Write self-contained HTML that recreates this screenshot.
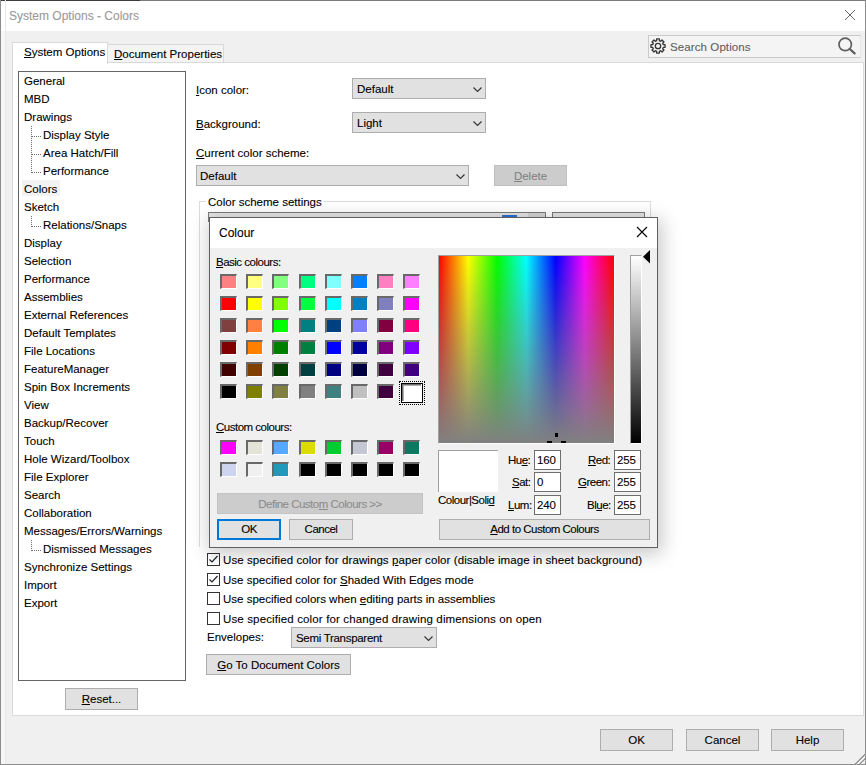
<!DOCTYPE html>
<html><head><meta charset="utf-8">
<style>
*{box-sizing:border-box;margin:0;padding:0}
html,body{width:866px;height:765px;overflow:hidden;background:#f0f0f0}
body{position:relative;font-family:"Liberation Sans",sans-serif;font-size:11.5px;color:#000;-webkit-text-stroke:0.1px currentColor}
.a{position:absolute}
.t{position:absolute;white-space:nowrap;line-height:18px;height:18px}
.u{text-decoration:underline;text-underline-offset:1px}
.btn{position:absolute;background:#e1e1e1;border:1px solid #adadad;text-align:center;white-space:nowrap}
.combo{position:absolute;background:#e1e1e1;border:1px solid #adadad;white-space:nowrap}
.combo svg{position:absolute;right:3px;top:8px}
.tree .t{left:24px}
.tree .s{left:43px}
.sw{position:absolute;width:17px;height:15px;border-top:2px solid #696969;border-left:2px solid #696969;border-right:1px solid #fff;border-bottom:1px solid #fff}
.cb{position:absolute;width:13px;height:13px;border:1px solid #333;background:#fff}
.dl{font-size:11.5px;letter-spacing:-0.5px}
.ed{position:absolute;background:#fff;border:1px solid #6f6f6f;height:20px;width:27px;padding-left:2px;line-height:19px;font-size:11.5px;letter-spacing:-0.2px}
</style></head><body>
<!-- window frame -->
<div class="a" style="left:0;top:0;width:866px;height:31px;background:#fff"></div>
<div class="a" style="left:0;top:0;width:866px;height:1px;background:#7a7a7a"></div><div class="a" style="left:0;top:0;width:140px;height:1px;background:#3c3c3c"></div>
<div class="a" style="left:1px;top:31px;width:4px;height:733px;background:#f6f6f6"></div><div class="a" style="left:5px;top:0;width:1px;height:764px;background:#e9e9e9"></div>
<div class="a" style="left:0;top:0;width:1px;height:765px;background:#8c8c8c"></div>
<div class="a" style="left:865px;top:0;width:1px;height:765px;background:#8c8c8c"></div>
<div class="a" style="left:0;top:764px;width:866px;height:1px;background:#8c8c8c"></div>
<div class="t" style="left:9px;top:7px;color:#9a9a9a;font-size:12px">System Options - Colors</div>
<svg class="a" style="left:844px;top:9px" width="12" height="12"><path d="M1 1L11 11M11 1L1 11" stroke="#6a6a6a" stroke-width="1"/></svg>

<!-- search -->
<div class="a" style="left:648px;top:35px;width:213px;height:23px;background:#f4f4f4;border:1px solid #c9c9c9;border-right-color:#e6e6e6"></div>
<svg class="a" style="left:648px;top:36px" width="20" height="20" viewBox="0 0 20 20"><path d="M7.93 5.01 L8.60 4.78 L8.63 2.93 L11.37 2.93 L11.40 4.78 L12.07 5.01 L12.70 5.32 L14.03 4.03 L15.97 5.97 L14.68 7.30 L14.99 7.93 L15.22 8.60 L17.07 8.63 L17.07 11.37 L15.22 11.40 L14.99 12.07 L14.68 12.70 L15.97 14.03 L14.03 15.97 L12.70 14.68 L12.07 14.99 L11.40 15.22 L11.37 17.07 L8.63 17.07 L8.60 15.22 L7.93 14.99 L7.30 14.68 L5.97 15.97 L4.03 14.03 L5.32 12.70 L5.01 12.07 L4.78 11.40 L2.93 11.37 L2.93 8.63 L4.78 8.60 L5.01 7.93 L5.32 7.30 L4.03 5.97 L5.97 4.03 L7.30 5.32Z" fill="none" stroke="#333" stroke-width="1.3" stroke-linejoin="round"/><circle cx="10" cy="10" r="2.7" fill="none" stroke="#333" stroke-width="1.3"/></svg>
<div class="t" style="left:670px;top:38px;color:#606060;font-size:11.5px;letter-spacing:0.1px">Search Options</div>
<svg class="a" style="left:835px;top:35px" width="24" height="22"><circle cx="10.2" cy="9.4" r="6.2" fill="none" stroke="#5e5e5e" stroke-width="1.7"/><path d="M14.8 14L19.6 18.4" stroke="#5e5e5e" stroke-width="2.3" stroke-linecap="round"/></svg>

<!-- tabs & panel -->
<div class="a" style="left:12px;top:62px;width:852px;height:654px;background:#fff;border:1px solid #d9d9d9"></div>
<div class="a" style="left:107px;top:44px;width:117px;height:18px;background:#f4f4f4;border:1px solid #d9d9d9;border-bottom:none"></div>
<div class="a" style="left:12px;top:42px;width:96px;height:22px;background:#fff;border:1px solid #d9d9d9;border-bottom:none"></div>
<div class="t" style="left:24px;top:43px"><span class="u">S</span>ystem Options</div>
<div class="t" style="left:114px;top:45px"><span class="u">D</span>ocument Properties</div>

<!-- tree -->
<div class="a tree" style="left:18px;top:71px;width:168px;height:610px;background:#fff;border:1px solid #646464">
</div>
<div class="tree">
<div class="a" style="left:22px;top:180px;width:38px;height:16px;background:#f2f2f2"></div>
<div class="t" style="top:72px">General</div>
<div class="t" style="top:90px">MBD</div>
<div class="t" style="top:108px">Drawings</div>
<div class="t s" style="top:126px">Display Style</div>
<div class="t s" style="top:144px">Area Hatch/Fill</div>
<div class="t s" style="top:162px">Performance</div>
<div class="t" style="top:180px">Colors</div>
<div class="t" style="top:198px">Sketch</div>
<div class="t s" style="top:216px">Relations/Snaps</div>
<div class="t" style="top:234px">Display</div>
<div class="t" style="top:252px">Selection</div>
<div class="t" style="top:270px">Performance</div>
<div class="t" style="top:288px">Assemblies</div>
<div class="t" style="top:306px">External References</div>
<div class="t" style="top:324px">Default Templates</div>
<div class="t" style="top:342px">File Locations</div>
<div class="t" style="top:360px">FeatureManager</div>
<div class="t" style="top:378px">Spin Box Increments</div>
<div class="t" style="top:396px">View</div>
<div class="t" style="top:414px">Backup/Recover</div>
<div class="t" style="top:432px">Touch</div>
<div class="t" style="top:450px">Hole Wizard/Toolbox</div>
<div class="t" style="top:468px">File Explorer</div>
<div class="t" style="top:486px">Search</div>
<div class="t" style="top:504px">Collaboration</div>
<div class="t" style="top:522px">Messages/Errors/Warnings</div>
<div class="t s" style="top:540px">Dismissed Messages</div>
<div class="t" style="top:558px">Synchronize Settings</div>
<div class="t" style="top:576px">Import</div>
<div class="t" style="top:594px">Export</div>
</div>
<!-- tree dotted lines -->
<svg class="a" style="left:0;top:0" width="866" height="765">
<g stroke="#707070" stroke-dasharray="1 1" stroke-width="1">
<path d="M31.5 126v47M32 136.5h9M32 154.5h9M32 172.5h9"/>
<path d="M31.5 216v11M32 226.5h9"/>
<path d="M31.5 540v11M32 550.5h9"/>
</g>
</svg>
<div class="btn" style="left:65px;top:688px;width:73px;height:22px;line-height:20px"><span class="u">R</span>eset...</div>

<!-- right content -->
<div class="t" style="left:196px;top:81px"><span class="u">I</span>con color:</div>
<div class="combo" style="left:352px;top:78px;width:134px;height:21px;line-height:21px;padding-left:4px">Default<svg width="9" height="5"><path d="M0.5 0.5l4 4 4-4" fill="none" stroke="#333" stroke-width="1.1"/></svg></div>
<div class="t" style="left:196px;top:115px"><span class="u">B</span>ackground:</div>
<div class="combo" style="left:352px;top:112px;width:134px;height:21px;line-height:21px;padding-left:4px">Light<svg width="9" height="5"><path d="M0.5 0.5l4 4 4-4" fill="none" stroke="#333" stroke-width="1.1"/></svg></div>
<div class="t" style="left:196px;top:144px"><span class="u">C</span>urrent color scheme:</div>
<div class="combo" style="left:196px;top:165px;width:273px;height:21px;line-height:21px;padding-left:3px">Default<svg width="9" height="5"><path d="M0.5 0.5l4 4 4-4" fill="none" stroke="#333" stroke-width="1.1"/></svg></div>
<div class="btn" style="left:494px;top:165px;width:73px;height:21px;line-height:21px;background:#cccccc;border-color:#bfbfbf;color:#838383"><span class="u">D</span>elete</div>

<!-- group box -->
<div class="a" style="left:199px;top:201px;width:452px;height:346px;border:1px solid #dcdcdc;border-bottom:none"></div>
<div class="t" style="left:206px;top:193px;background:#fff;padding:0 2px">Color scheme settings</div>
<div class="a" style="left:208px;top:212px;width:338px;height:10px;background:#e5e5e5;border:1px solid #7a7a7a"></div><div class="a" style="left:528px;top:213px;width:17px;height:6px;background:#d4d4d4"></div><div class="a" style="left:502px;top:215px;width:15px;height:2px;background:#2a6fd6"></div>
<div class="a" style="left:552px;top:212px;width:93px;height:10px;background:#e5e5e5;border:1px solid #7a7a7a"></div>

<!-- checkboxes -->
<div class="cb" style="left:207px;top:553px"><svg width="11" height="11" style="position:absolute;left:0;top:0"><path d="M1.5 5.5l2.5 2.5 5.5-6" fill="none" stroke="#222" stroke-width="1.2"/></svg></div>
<div class="t" style="left:223px;top:551px;letter-spacing:0.085px">Use specified color for drawings <span class="u">p</span>aper color (disable image in sheet background)</div>
<div class="cb" style="left:207px;top:573px"><svg width="11" height="11" style="position:absolute;left:0;top:0"><path d="M1.5 5.5l2.5 2.5 5.5-6" fill="none" stroke="#222" stroke-width="1.2"/></svg></div>
<div class="t" style="left:223px;top:571px">Use specified color for <span class="u">S</span>haded With Edges mode</div>
<div class="cb" style="left:207px;top:592px"></div>
<div class="t" style="left:223px;top:590px">Use specified colors when <span class="u">e</span>diting parts in assemblies</div>
<div class="cb" style="left:207px;top:612px"></div>
<div class="t" style="left:223px;top:610px;letter-spacing:0.14px">Use specified color for changed drawing dimensions on open</div>
<div class="t" style="left:207px;top:628px">Envelopes:</div>
<div class="combo" style="left:291px;top:627px;width:146px;height:21px;line-height:20px;padding-left:4px"><span style="letter-spacing:-0.3px">Semi Transparent</span><svg width="9" height="5"><path d="M0.5 0.5l4 4 4-4" fill="none" stroke="#333" stroke-width="1.1"/></svg></div>
<div class="btn" style="left:206px;top:654px;width:145px;height:21px;line-height:21px"><span class="u">G</span>o To Document Colors</div>

<svg class="a" style="left:852px;top:751px" width="14" height="14"><path d="M3 13.5L13.5 3M7.5 13.5L13.5 7.5" stroke="#8a8a8a" stroke-width="1.3"/><path d="M4.5 13.5L13.5 4.5M9 13.5L13.5 9" stroke="#fff" stroke-width="0.8"/></svg>
<!-- bottom buttons -->
<div class="btn" style="left:600px;top:729px;width:73px;height:22px;line-height:20px">OK</div>
<div class="btn" style="left:686px;top:729px;width:73px;height:22px;line-height:20px">Cancel</div>
<div class="btn" style="left:771px;top:729px;width:73px;height:22px;line-height:20px">Help</div>

<!-- COLOUR DIALOG -->
<div class="a" style="left:209px;top:217px;width:449px;height:331px;background:#f0f0f0;border:1px solid #5f5f5f;box-shadow:2px 4px 18px 2px rgba(0,0,0,0.22)"></div>
<div class="a" style="left:210px;top:218px;width:447px;height:30px;background:#fff"></div>
<div class="t" style="left:219px;top:224px;font-size:12px">Colour</div>
<svg class="a" style="left:636px;top:226px" width="12" height="12"><path d="M1 1L11 11M11 1L1 11" stroke="#000" stroke-width="1.1"/></svg>
<div class="dl">
<div class="t" style="left:216px;top:253px"><span class="u">B</span>asic colours:</div>
<div class="sw" style="left:220px;top:274px;background:#FF8080"></div>
<div class="sw" style="left:246px;top:274px;background:#FFFF80"></div>
<div class="sw" style="left:272px;top:274px;background:#80FF80"></div>
<div class="sw" style="left:299px;top:274px;background:#00FF80"></div>
<div class="sw" style="left:325px;top:274px;background:#80FFFF"></div>
<div class="sw" style="left:351px;top:274px;background:#0080FF"></div>
<div class="sw" style="left:377px;top:274px;background:#FF80C0"></div>
<div class="sw" style="left:403px;top:274px;background:#FF80FF"></div>
<div class="sw" style="left:220px;top:296px;background:#FF0000"></div>
<div class="sw" style="left:246px;top:296px;background:#FFFF00"></div>
<div class="sw" style="left:272px;top:296px;background:#80FF00"></div>
<div class="sw" style="left:299px;top:296px;background:#00FF40"></div>
<div class="sw" style="left:325px;top:296px;background:#00FFFF"></div>
<div class="sw" style="left:351px;top:296px;background:#0080C0"></div>
<div class="sw" style="left:377px;top:296px;background:#8080C0"></div>
<div class="sw" style="left:403px;top:296px;background:#FF00FF"></div>
<div class="sw" style="left:220px;top:318px;background:#804040"></div>
<div class="sw" style="left:246px;top:318px;background:#FF8040"></div>
<div class="sw" style="left:272px;top:318px;background:#00FF00"></div>
<div class="sw" style="left:299px;top:318px;background:#008080"></div>
<div class="sw" style="left:325px;top:318px;background:#004080"></div>
<div class="sw" style="left:351px;top:318px;background:#8080FF"></div>
<div class="sw" style="left:377px;top:318px;background:#800040"></div>
<div class="sw" style="left:403px;top:318px;background:#FF0080"></div>
<div class="sw" style="left:220px;top:340px;background:#800000"></div>
<div class="sw" style="left:246px;top:340px;background:#FF8000"></div>
<div class="sw" style="left:272px;top:340px;background:#008000"></div>
<div class="sw" style="left:299px;top:340px;background:#008040"></div>
<div class="sw" style="left:325px;top:340px;background:#0000FF"></div>
<div class="sw" style="left:351px;top:340px;background:#0000A0"></div>
<div class="sw" style="left:377px;top:340px;background:#800080"></div>
<div class="sw" style="left:403px;top:340px;background:#8000FF"></div>
<div class="sw" style="left:220px;top:362px;background:#400000"></div>
<div class="sw" style="left:246px;top:362px;background:#804000"></div>
<div class="sw" style="left:272px;top:362px;background:#004000"></div>
<div class="sw" style="left:299px;top:362px;background:#004040"></div>
<div class="sw" style="left:325px;top:362px;background:#000080"></div>
<div class="sw" style="left:351px;top:362px;background:#000040"></div>
<div class="sw" style="left:377px;top:362px;background:#400040"></div>
<div class="sw" style="left:403px;top:362px;background:#400080"></div>
<div class="sw" style="left:220px;top:384px;background:#000000"></div>
<div class="sw" style="left:246px;top:384px;background:#808000"></div>
<div class="sw" style="left:272px;top:384px;background:#808040"></div>
<div class="sw" style="left:299px;top:384px;background:#808080"></div>
<div class="sw" style="left:325px;top:384px;background:#408080"></div>
<div class="sw" style="left:351px;top:384px;background:#C0C0C0"></div>
<div class="sw" style="left:377px;top:384px;background:#400040"></div>
<div class="sw" style="left:220px;top:440px;background:#FF00FF"></div>
<div class="sw" style="left:246px;top:440px;background:#E3E3D8"></div>
<div class="sw" style="left:272px;top:440px;background:#55AAFF"></div>
<div class="sw" style="left:299px;top:440px;background:#DCDC00"></div>
<div class="sw" style="left:325px;top:440px;background:#00CC33"></div>
<div class="sw" style="left:351px;top:440px;background:#C4C8D4"></div>
<div class="sw" style="left:377px;top:440px;background:#990066"></div>
<div class="sw" style="left:403px;top:440px;background:#0F7860"></div>
<div class="sw" style="left:220px;top:462px;background:#CCD4F0"></div>
<div class="sw" style="left:246px;top:462px;background:#F0F0F0"></div>
<div class="sw" style="left:272px;top:462px;background:#2299BB"></div>
<div class="sw" style="left:299px;top:462px;background:#000000"></div>
<div class="sw" style="left:325px;top:462px;background:#000000"></div>
<div class="sw" style="left:351px;top:462px;background:#000000"></div>
<div class="sw" style="left:377px;top:462px;background:#000000"></div>
<div class="sw" style="left:403px;top:462px;background:#000000"></div>
<div class="a" style="left:399px;top:381px;width:26px;height:24px;border:1px dotted #000"></div>
<div class="a" style="left:401px;top:383px;width:22px;height:20px;border:1px solid #000;background:#fff"></div>
<div class="a" style="left:402px;top:384px;width:19px;height:17px;border-top:1px solid #6e6e6e;border-left:1px solid #6e6e6e;box-shadow:inset 1px 1px 0 #b0b0b0;background:#fff"></div>
<div class="t" style="left:216px;top:418px"><span class="u">C</span>ustom colours:</div>
<div class="btn" style="left:217px;top:493px;width:206px;height:21px;line-height:21px;background:#cccccc;border-color:#c4c4c4;color:#8d8d8d">Define Custo<span class="u">m</span> Colours &gt;&gt;</div>
<div class="btn" style="left:217px;top:519px;width:64px;height:21px;line-height:17px;border:2px solid #0078d7">OK</div>
<div class="btn" style="left:289px;top:519px;width:64px;height:21px;line-height:19px">Cancel</div>
<!-- spectrum -->
<div class="a" style="left:438px;top:255px;width:177px;height:189px;border-top:1px solid #a0a0a0;border-left:1px solid #a0a0a0;border-right:1px solid #fff;border-bottom:1px solid #fff"></div>
<div class="a" style="left:439px;top:256px;width:175px;height:187px;background:linear-gradient(to bottom,rgba(128,128,128,0),#808080),linear-gradient(to right,#f00,#ff0 16.67%,#0f0 33.33%,#0ff 50%,#00f 66.67%,#f0f 83.33%,#f00)"></div>
<svg class="a" style="left:547px;top:433px" width="19" height="10"><g fill="#000"><rect x="8" y="0" width="3" height="4"/><rect x="0" y="8" width="5" height="2"/><rect x="14" y="8" width="5" height="2"/></g></svg>
<div class="a" style="left:630px;top:255px;width:12px;height:189px;border-top:1px solid #a0a0a0;border-left:1px solid #a0a0a0;border-right:1px solid #fff;border-bottom:1px solid #fff"></div>
<div class="a" style="left:631px;top:256px;width:10px;height:187px;background:linear-gradient(to bottom,#fff,#000)"></div>
<svg class="a" style="left:643px;top:250px" width="8" height="14"><path d="M7 0V13.5L0 6.75z" fill="#000"/></svg>
<!-- preview -->
<div class="a" style="left:438px;top:450px;width:60px;height:42px;background:#fff;border-top:1px solid #a0a0a0;border-left:1px solid #a0a0a0"></div>
<div class="t" style="left:438px;top:491px">Colour|Soli<span class="u">d</span></div>
<div class="t" style="left:508px;top:451px">Hu<span class="u">e</span>:</div>
<div class="t" style="left:512px;top:473px"><span class="u">S</span>at:</div>
<div class="t" style="left:508px;top:496px"><span class="u">L</span>um:</div>
<div class="ed" style="left:534px;top:450px">160</div>
<div class="ed" style="left:534px;top:472px">0</div>
<div class="ed" style="left:534px;top:495px">240</div>
<div class="t" style="left:588px;top:451px"><span class="u">R</span>ed:</div>
<div class="t" style="left:578px;top:473px"><span class="u">G</span>reen:</div>
<div class="t" style="left:587px;top:496px">Bl<span class="u">u</span>e:</div>
<div class="ed" style="left:614px;top:450px">255</div>
<div class="ed" style="left:614px;top:472px">255</div>
<div class="ed" style="left:614px;top:495px">255</div>
<div class="btn" style="left:439px;top:519px;width:211px;height:21px;line-height:19px"><span class="u">A</span>dd to Custom Colours</div>
</div>

</body></html>
